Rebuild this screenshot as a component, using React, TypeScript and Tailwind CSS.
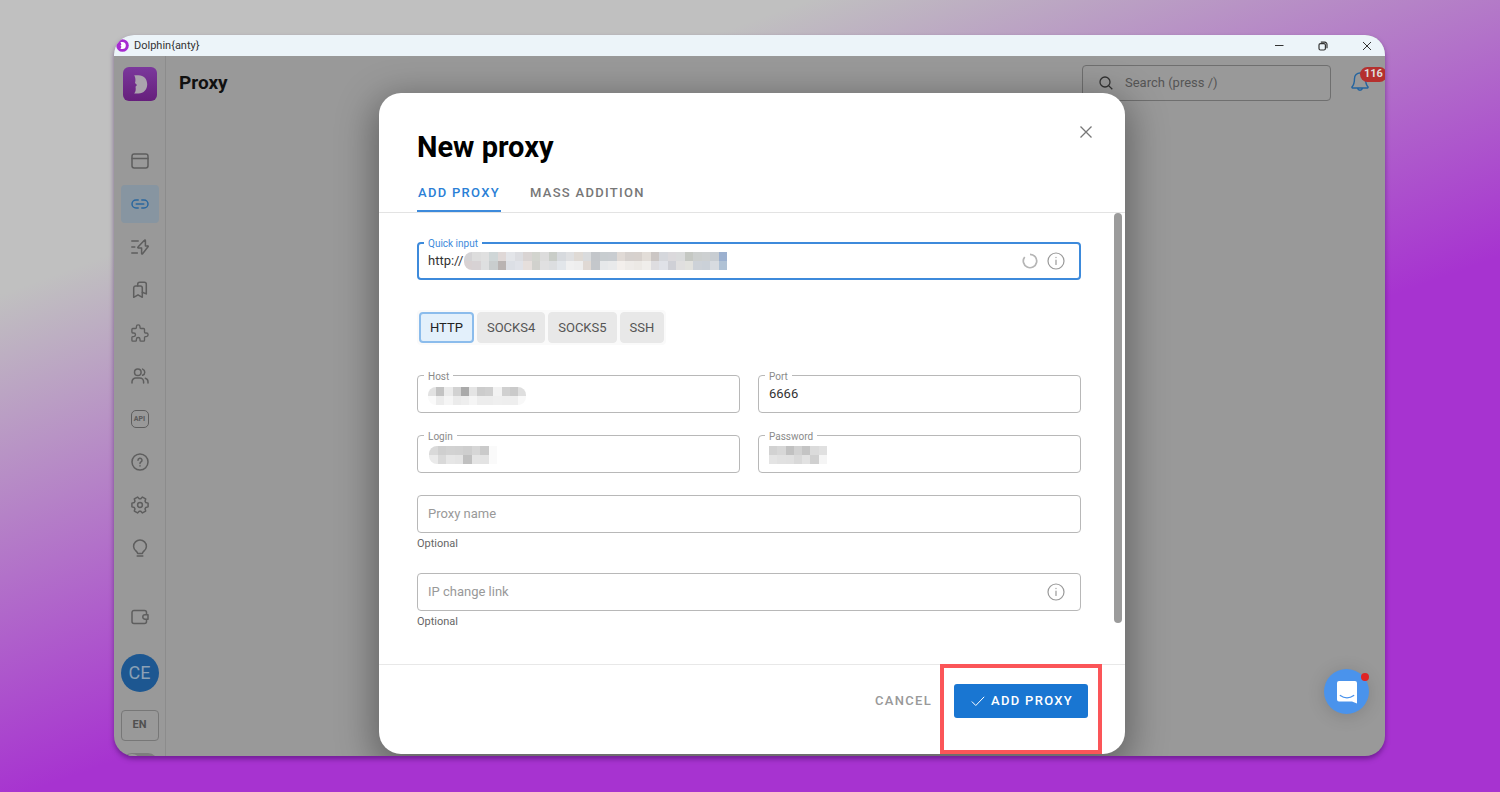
import { useState } from "react";
import type { ReactNode } from "react";

const TYPES = ["HTTP", "SOCKS4", "SOCKS5", "SSH"];

// gear outline with six rounded teeth
const GEAR =
  "M" +
  Array.from({ length: 6 })
    .flatMap((_, i) =>
      [
        [-13, 8.3],
        [13, 8.3],
        [23, 6.3],
        [37, 6.3],
      ].map(([a, r]) => {
        const t = ((i * 60 + a) * Math.PI) / 180;
        return `${(9 + r * Math.cos(t)).toFixed(2)} ${(9 + r * Math.sin(t)).toFixed(2)}`;
      })
    )
    .join("L") +
  "Z";

const PUZZLE =
  "M4 7h3a1 1 0 0 0 1-1v-1a2 2 0 0 1 4 0v1a1 1 0 0 0 1 1h3a1 1 0 0 1 1 1v3a1 1 0 0 0 1 1h1a2 2 0 0 1 0 4h-1a1 1 0 0 0-1 1v3a1 1 0 0 1-1 1h-3a1 1 0 0 1-1-1v-1a2 2 0 0 0-4 0v1a1 1 0 0 1-1 1h-3a1 1 0 0 1-1-1v-3a1 1 0 0 1 1-1h1a2 2 0 0 0 0-4h-1a1 1 0 0 1-1-1v-3a1 1 0 0 1 1-1";

function Icon({ children, viewBox = "0 0 18 18" }: { children: ReactNode; viewBox?: string }) {
  return (
    <svg
      width="18"
      height="18"
      viewBox={viewBox}
      fill="none"
      stroke="currentColor"
      strokeWidth="1.5"
      strokeLinecap="round"
      strokeLinejoin="round"
      aria-hidden="true"
    >
      {children}
    </svg>
  );
}

const NAV: { label: string; icon: ReactNode }[] = [
  {
    label: "Browsers",
    icon: (
      <Icon>
        <rect x="1" y="2" width="16" height="14" rx="2.2" />
        <path d="M1 6.5h16" />
      </Icon>
    ),
  },
  {
    label: "Proxy",
    icon: (
      <Icon>
        <path d="M7.2 5H5a4 4 0 0 0 0 8h2.2M10.8 5H13a4 4 0 0 1 0 8h-2.2M5.2 9h7.6" />
      </Icon>
    ),
  },
  {
    label: "Automation",
    icon: (
      <Icon>
        <path d="M.8 3h6.4M.8 9h3M.8 15h5.6" />
        <path d="M13.4 2.2 7 9a.5.5 0 0 0 .4.9h3.2v5.5c0 .7.6.9 1 .4l5.4-7a.5.5 0 0 0-.4-.9h-2.2V2.5c0-.6-.6-.8-1-.3z" />
      </Icon>
    ),
  },
  {
    label: "Bookmarks",
    icon: (
      <Icon>
        <path d="M2.7 7a2 2 0 0 1 2-2h4.6a2 2 0 0 1 2 2v9.3L7 13.8l-4.3 2.5z" />
        <path d="M6.7 5V3.3a2 2 0 0 1 2-2h4.6a2 2 0 0 1 2 2v9.6l-4-1.6" />
      </Icon>
    ),
  },
  {
    label: "Extensions",
    icon: (
      <Icon viewBox="2 2 20 20">
        <path d={PUZZLE} />
      </Icon>
    ),
  },
  {
    label: "Users",
    icon: (
      <Icon>
        <circle cx="6.8" cy="5.2" r="3.3" />
        <path d="M1 16v-1.2A3.8 3.8 0 0 1 4.8 11h4a3.8 3.8 0 0 1 3.8 3.8V16M11.6 2.1a3.3 3.3 0 0 1 0 6.2M14.3 11.2a3.8 3.8 0 0 1 2.7 3.6V16" />
      </Icon>
    ),
  },
  {
    label: "API",
    icon: (
      <span className="flex h-[18px] w-[18px] items-center justify-center rounded-[5px] border border-[#5e5e5e] text-[7px] font-black leading-none">
        API
      </span>
    ),
  },
  {
    label: "Help",
    icon: (
      <Icon>
        <circle cx="9" cy="9" r="8" />
        <path d="M7 7.2a2 2 0 1 1 3 1.7c-.7.4-1 .8-1 1.5M9 12.8v.1" />
      </Icon>
    ),
  },
  {
    label: "Settings",
    icon: (
      <Icon>
        <path d={GEAR} />
        <circle cx="9" cy="9" r="2.4" />
      </Icon>
    ),
  },
  {
    label: "Ideas",
    icon: (
      <Icon>
        <path d="M6.6 14.4c0-2-4-3-4-7a6.4 6.4 0 0 1 12.8 0c0 4-4 5-4 7zM6.2 17h5.6" />
      </Icon>
    ),
  },
];

// rows of colour blocks that hide private values
function Mosaic({ rows, width, className = "" }: { rows: string[][]; width: number; className?: string }) {
  const cell = width / rows[0].length;
  return (
    <svg
      width={width}
      height={rows.length * 9}
      className={`pointer-events-none absolute ${className}`}
      shapeRendering="crispEdges"
      aria-hidden="true"
    >
      {rows.map((row, y) =>
        row.map((c, x) => <rect key={`${x}-${y}`} x={x * cell} y={y * 9} width={cell} height="9" fill={c} />)
      )}
    </svg>
  );
}

const QUICK_MOSAIC = [
  "#d4d3d5 #dddddd #e0e0e0 #cfd6d7 #dfd8d7 #e3e5e9 #dcdde1 #d9d4d3 #d2d4ce #dcdcdc #c9cdc8 #d7dade #dfe0e2 #dfdad5 #d9dbdd #c3c6ca #c8cdd0 #c9cdd1 #e0dad6 #d6d1ce #d7d1cd #e2ddd8 #cbc6c4 #d5d7dc #dbd9dc #dadbdc #c5c8c3 #cccfce #cdd0d1 #c8cdd2 #9bb0cf".split(" "),
  "#d8d1d2 #d7d2d4 #dedfe0 #c9cdce #b9b3b2 #dcdfe5 #e0e2e8 #e6dfdc #d1d1cd #e0e0e1 #dcdee0 #e2e6ea #f0f0f0 #eeeeee #e0d9d4 #c4c7cb #e6e8ea #e9eaeb #f3efec #eeebe8 #ece9e5 #f0eeeb #dedde0 #e0e2e8 #cfd0d6 #e0dfdf #e2e2de #cdd2d8 #cbd1d8 #d7dbe0 #b0c2d5".split(" "),
];
const HOST_MOSAIC = [
  "#e2e2e2 #c3c3c3 #ebebeb #d2d2d2 #aaaaaa #e4e4e4 #cccccc #cfcfcf #f2f2f2 #d0d0d0 #cacaca #dedede".split(" "),
  "#fafafa #ececec #f5f5f5 #ebebeb #eeeeee #f5f5f5 #ededed #ededed #efefef #eeeeee #eeeeee #f8f8f8".split(" "),
];
const LOGIN_MOSAIC = [
  "#d9d9d9 #cfcfcf #d2d2d2 #d1d1d1 #cecece #d6d6d6 #cacaca #fafafa".split(" "),
  "#eaeaea #d9d9d9 #e6e6e6 #e4e4e4 #c0c0c0 #e4e4e4 #e3e3e3 #fafafa".split(" "),
];
const PASSWORD_MOSAIC = [
  "#d2d2d2 #d7d7d7 #c1c1c1 #d1d1d1 #c4c4c4 #dbdbdb #e0e0e0".split(" "),
  "#e4e4e4 #e1e1e1 #e0e0e0 #d9d9d9 #e2e2e2 #d0d0d0 #f5f5f5".split(" "),
];

function InfoIcon() {
  return (
    <svg width="18" height="18" viewBox="0 0 18 18" fill="none" stroke="#999" strokeWidth="1.2" strokeLinecap="round" aria-hidden="true">
      <circle cx="9" cy="9" r="8" />
      <path d="M9 8.2v4.3M9 5.4v.2" />
    </svg>
  );
}

type FieldProps = {
  id: string;
  label: string;
  value?: string;
  placeholder?: string;
  active?: boolean;
  helper?: string;
  type?: string;
  children?: ReactNode;
};

function Field({ id, label, value, placeholder, active, helper, type = "text", children }: FieldProps) {
  return (
    <div>
      <div className="relative">
        <input
          id={id}
          type={type}
          defaultValue={value}
          placeholder={placeholder}
          aria-label={label}
          className={`block h-[38px] w-full rounded bg-white pb-px text-[13px] text-[#333] outline-none placeholder:text-[#999] ${
            active ? "border-2 border-[#3d8adb] px-[9px]" : "border border-[#b8b8b8] px-[10px]"
          }`}
        />
        {!placeholder && (
          <label
            htmlFor={id}
            className={`absolute -top-1 left-[7px] bg-white px-1 text-[10px] leading-3 ${
              active ? "text-[#3d8adb]" : "text-[#8a8a8a]"
            }`}
          >
            {label}
          </label>
        )}
        {children}
      </div>
      {helper && <p className="mt-1 text-[11px] leading-[14px] text-[#666]">{helper}</p>}
    </div>
  );
}

function TitleBar() {
  return (
    <div className="flex h-[21px] shrink-0 items-center bg-[#ecf4f9] pl-[2px] pr-[13px]">
      <svg width="13" height="13" viewBox="0 0 13 13" aria-hidden="true">
        <circle cx="6.5" cy="6.5" r="6.3" fill="#a62bd0" />
        <path d="M4.5 3h1.8a3.5 3.5 0 0 1 0 7H4.5l.9-2.3-.9-1 .9-1.2z" fill="#fff" />
      </svg>
      <span className="ml-[5px] flex-1 pt-px text-[11px] text-[#333]">Dolphin{"{anty}"}</span>
      <div className="flex items-center gap-[34px] text-[#333]">
        <button aria-label="Minimize">
          <svg width="10" height="10" viewBox="0 0 10 10" stroke="currentColor" fill="none">
            <path d="M1 4.5h8.5" />
          </svg>
        </button>
        <button aria-label="Restore">
          <svg width="10" height="10" viewBox="0 0 10 10" stroke="currentColor" fill="none" strokeWidth="1.2">
            <rect x="1" y="2.6" width="6.4" height="6.4" rx="1.5" />
            <path d="M2.8 1.2h4a2.2 2.2 0 0 1 2.2 2.2v3.8" />
          </svg>
        </button>
        <button aria-label="Close">
          <svg width="10" height="10" viewBox="0 0 10 10" stroke="currentColor" fill="none">
            <path d="M1 1l8 8M9 1L1 9" />
          </svg>
        </button>
      </div>
    </div>
  );
}

function Sidebar() {
  return (
    <aside className="flex w-[52px] shrink-0 flex-col items-center overflow-hidden border-r border-[#8c8c8c] pt-[11px] text-[#5e5e5e]">
      <svg width="34" height="34" viewBox="0 0 34 34" className="shrink-0" aria-hidden="true">
        <defs>
          <linearGradient id="logo" x1="0" y1="0" x2="0" y2="1">
            <stop offset="0" stopColor="#7b389c" />
            <stop offset="1" stopColor="#661f7c" />
          </linearGradient>
        </defs>
        <rect width="34" height="34" rx="6" fill="url(#logo)" />
        <path
          d="M11.2 8.2h4.3c5.3 0 8.7 3.7 8.7 9.1s-3.4 9.1-8.7 9.1h-4.3c1.7-1.6 1.8-4.3 1.3-6.6l1.5-1.9-2-1.9c.8-2.8.6-5.6-.8-7.8z"
          fill="#aaa3ad"
        />
      </svg>
      <nav className="mt-[41px] flex flex-col gap-[5px]">
        {NAV.map((n) => (
          <button
            key={n.label}
            aria-label={n.label}
            className={`flex h-[38px] w-[38px] items-center justify-center rounded-sm ${
              n.label === "Proxy" ? "bg-[#8795a1] text-[#2a679f]" : ""
            }`}
          >
            {n.icon}
          </button>
        ))}
      </nav>
      <button aria-label="Wallet" className="mt-[31px] flex h-[38px] w-[38px] shrink-0 items-center justify-center">
        <Icon>
          <path d="M15.5 6.3V4.5a2 2 0 0 0-2-2H3a2 2 0 0 0-2 2v9a2 2 0 0 0 2 2h10.5a2 2 0 0 0 2-2v-1.8M17 6.8h-3a2.2 2.2 0 0 0 0 4.4h3z" />
        </Icon>
      </button>
      <button className="mt-[18px] h-[38px] w-[38px] shrink-0 rounded-full bg-[#1d5791] text-lg text-[#8ba0b5]">CE</button>
      <button className="mt-[18px] h-[31px] w-[38px] shrink-0 rounded border border-[#777] text-[11px] font-bold text-[#505050]">
        EN
      </button>
      <button aria-label="Theme" className="mt-3 flex h-5 w-9 shrink-0 rounded-full bg-[#7d7d7d] p-px">
        <span className="h-[18px] w-[18px] rounded-full bg-[#999]" />
      </button>
    </aside>
  );
}

function ProxyDialog() {
  const [type, setType] = useState("HTTP");

  return (
    <div
      role="dialog"
      aria-labelledby="dialog-title"
      className="mb-[2px] mt-[37px] flex w-full max-w-[746px] flex-col overflow-hidden rounded-[22px] bg-white shadow-[0_10px_36px_6px_rgba(0,0,0,0.35)]"
    >
      <header className="shrink-0 border-b border-[#e3e3e3] px-[38px]">
        <div className="flex items-start justify-between pt-[30px]">
          <h2 id="dialog-title" className="pt-1 text-[29px] font-bold leading-10 text-black">
            New proxy
          </h2>
          <button aria-label="Close dialog" className="mr-[-5px] pt-[3px] text-[#777]">
            <svg width="12" height="12" viewBox="0 0 12 12" fill="none" stroke="currentColor" strokeWidth="1.3">
              <path d="M.5.5l11 11M11.5.5l-11 11" />
            </svg>
          </button>
        </div>
        <div role="tablist" className="mt-[9px] flex gap-7 text-[13px] font-medium tracking-widest">
          <button role="tab" aria-selected="true" className="h-9 border-b-2 border-[#3d8adb] px-px text-[#2b7fd6]">
            ADD PROXY
          </button>
          <button role="tab" aria-selected="false" className="h-9 border-b-2 border-transparent px-px text-[#777]">
            MASS ADDITION
          </button>
        </div>
      </header>

      <div className="flex min-h-0 flex-1">
        <form className="min-w-0 flex-1 overflow-hidden pl-[38px] pr-[33px] pt-[29px]">
          <Field id="quick" label="Quick input" value="http://" active>
            <Mosaic rows={QUICK_MOSAIC} width={263} className="left-[47px] top-[10px] rounded-l-lg" />
            <span className="absolute right-4 top-[10px] flex items-center gap-2">
              <svg width="18" height="18" viewBox="0 0 18 18" fill="none" stroke="#b5b5b5" strokeWidth="1.7" aria-hidden="true">
                <path d="M9 2.3a6.7 6.7 0 1 1-5.3 2.6" />
              </svg>
              <InfoIcon />
            </span>
          </Field>

          {/* protocol */}
          <div className="mt-[30px] flex w-fit gap-[3px] rounded bg-[#fafafa] p-[2px]">
            {TYPES.map((t) => (
              <button
                key={t}
                type="button"
                aria-pressed={t === type}
                onClick={() => setType(t)}
                className={`h-[31px] rounded px-[9px] text-[13px] ${
                  t === type
                    ? "border-2 border-[#8bbcec] bg-[#e3f0fb] text-[#222]"
                    : "border border-[#e8e8e8] bg-[#e8e8e8] text-[#555]"
                }`}
              >
                {t}
              </button>
            ))}
          </div>

          <div className="mt-[30px] grid grid-cols-2 gap-x-[18px] gap-y-[22px]">
            <Field id="host" label="Host">
              <Mosaic rows={HOST_MOSAIC} width={98} className="left-[11px] top-[12px] rounded-lg" />
            </Field>
            <Field id="port" label="Port" value="6666" />
            <Field id="login" label="Login">
              <Mosaic rows={LOGIN_MOSAIC} width={68} className="left-[12px] top-[11px] rounded-l-lg" />
            </Field>
            <Field id="password" label="Password" type="password">
              <Mosaic rows={PASSWORD_MOSAIC} width={58} className="left-[11px] top-[11px]" />
            </Field>
          </div>

          <div className="mt-[22px] flex flex-col gap-[22px]">
            <Field id="name" label="Proxy name" placeholder="Proxy name" helper="Optional" />
            <Field id="link" label="IP change link" placeholder="IP change link" helper="Optional">
              <span className="absolute right-4 top-[10px]">
                <InfoIcon />
              </span>
            </Field>
          </div>
        </form>
        <div className="mr-[3px] w-2 shrink-0">
          <div className="h-[91%] rounded-full bg-[#9b9b9b]" />
        </div>
      </div>

      <footer className="flex h-[90px] shrink-0 items-start justify-end gap-[22px] border-t border-[#e8e8e8] pr-[37px] pt-[19px] text-[13px] font-medium tracking-widest">
        <button className="h-[34px] text-[#999]">CANCEL</button>
        <div className="relative">
          <button className="flex h-[34px] items-center gap-[6px] rounded-[3px] bg-[#1976d2] pl-[17px] pr-[15px] text-white">
            <svg width="14" height="14" viewBox="0 0 14 14" fill="none" stroke="currentColor" aria-hidden="true">
              <path d="M.8 7.5l4 4L13.2 2.8" />
            </svg>
            ADD PROXY
          </button>
          <div className="pointer-events-none absolute -bottom-9 -left-[14px] -right-[14px] -top-5 border-4 border-[#fb5558]" />
        </div>
      </footer>
    </div>
  );
}

export default function App() {
  return (
    <div className="h-screen bg-[linear-gradient(160deg,#c0c0c0_22%,#a733d0_60%)] pb-9 pl-[114px] pr-[115px] pt-[35px] font-[Roboto,sans-serif]">
      <div className="flex h-full flex-col overflow-hidden rounded-[20px] bg-[#999] shadow-[0_3px_5px_rgba(60,10,90,0.5)]">
        <TitleBar />
        <div className="relative flex min-h-0 flex-1">
          <Sidebar />
          <main className="min-w-0 flex-1">
            <div className="flex items-start pl-[13px] pt-[9px]">
              <h1 className="flex-1 pt-1 text-[19px] font-bold leading-7 text-[#111]">Proxy</h1>
              <label className="flex h-9 w-[249px] items-center gap-3 rounded-sm border border-[#6f6f6f] px-4 text-[#333]">
                <svg width="14" height="14" viewBox="0 0 14 14" fill="none" stroke="currentColor" strokeWidth="1.3" aria-hidden="true">
                  <circle cx="6" cy="6" r="5" />
                  <path d="M9.6 9.6l3.7 3.7" />
                </svg>
                <input
                  aria-label="Search"
                  placeholder="Search (press /)"
                  className="min-w-0 flex-1 bg-transparent text-[13px] outline-none placeholder:text-[#555]"
                />
              </label>
              <button aria-label="Notifications" className="relative ml-5 mr-4 mt-[7px] text-[#25649f]">
                <svg width="18" height="20" viewBox="0 0 18 20" fill="none" stroke="currentColor" strokeWidth="1.4" strokeLinejoin="round">
                  <path d="M9 1a5.500 5.500 0 0 0-5.500 5.500c0 5-1 6.700-2.400 8.300-.4.500-.1 1.200.5 1.200h14.800c.6 0 .9-.7.5-1.200-1.400-1.600-2.400-3.300-2.400-8.300A5.500 5.500 0 0 0 9 1zM6.500 16.300a2.600 2.600 0 0 0 5 0" />
                </svg>
                <span className="absolute -top-[5px] left-[9px] flex h-[15px] items-center rounded-full bg-[#b5302e] px-1 text-[11px] font-bold text-[#ddd]">
                  116
                </span>
              </button>
            </div>
          </main>

          <div className="absolute inset-0 flex justify-center pl-[5px]">
            <ProxyDialog />
          </div>

          <button
            aria-label="Open chat"
            className="absolute bottom-[42px] right-4 flex h-[45px] w-[45px] items-center justify-center rounded-full bg-[#4a93ec] shadow-[0_2px_18px_rgba(0,0,0,0.15)]"
          >
            <svg width="22" height="24" viewBox="0 0 22 24" aria-hidden="true">
              <path d="M3 1h16a2 2 0 0 1 2 2v20.500L16 21.500H3a2 2 0 0 1-2-2V3a2 2 0 0 1 2-2z" fill="#fff" />
              <path d="M4.3 15.500c4 3 9.400 3 13.400 0" fill="none" stroke="#4a93ec" strokeWidth="1.3" strokeLinecap="round" />
            </svg>
            <span className="absolute right-0 top-1 h-2 w-2 rounded-full bg-[#e02424]" />
          </button>
        </div>
      </div>
    </div>
  );
}
